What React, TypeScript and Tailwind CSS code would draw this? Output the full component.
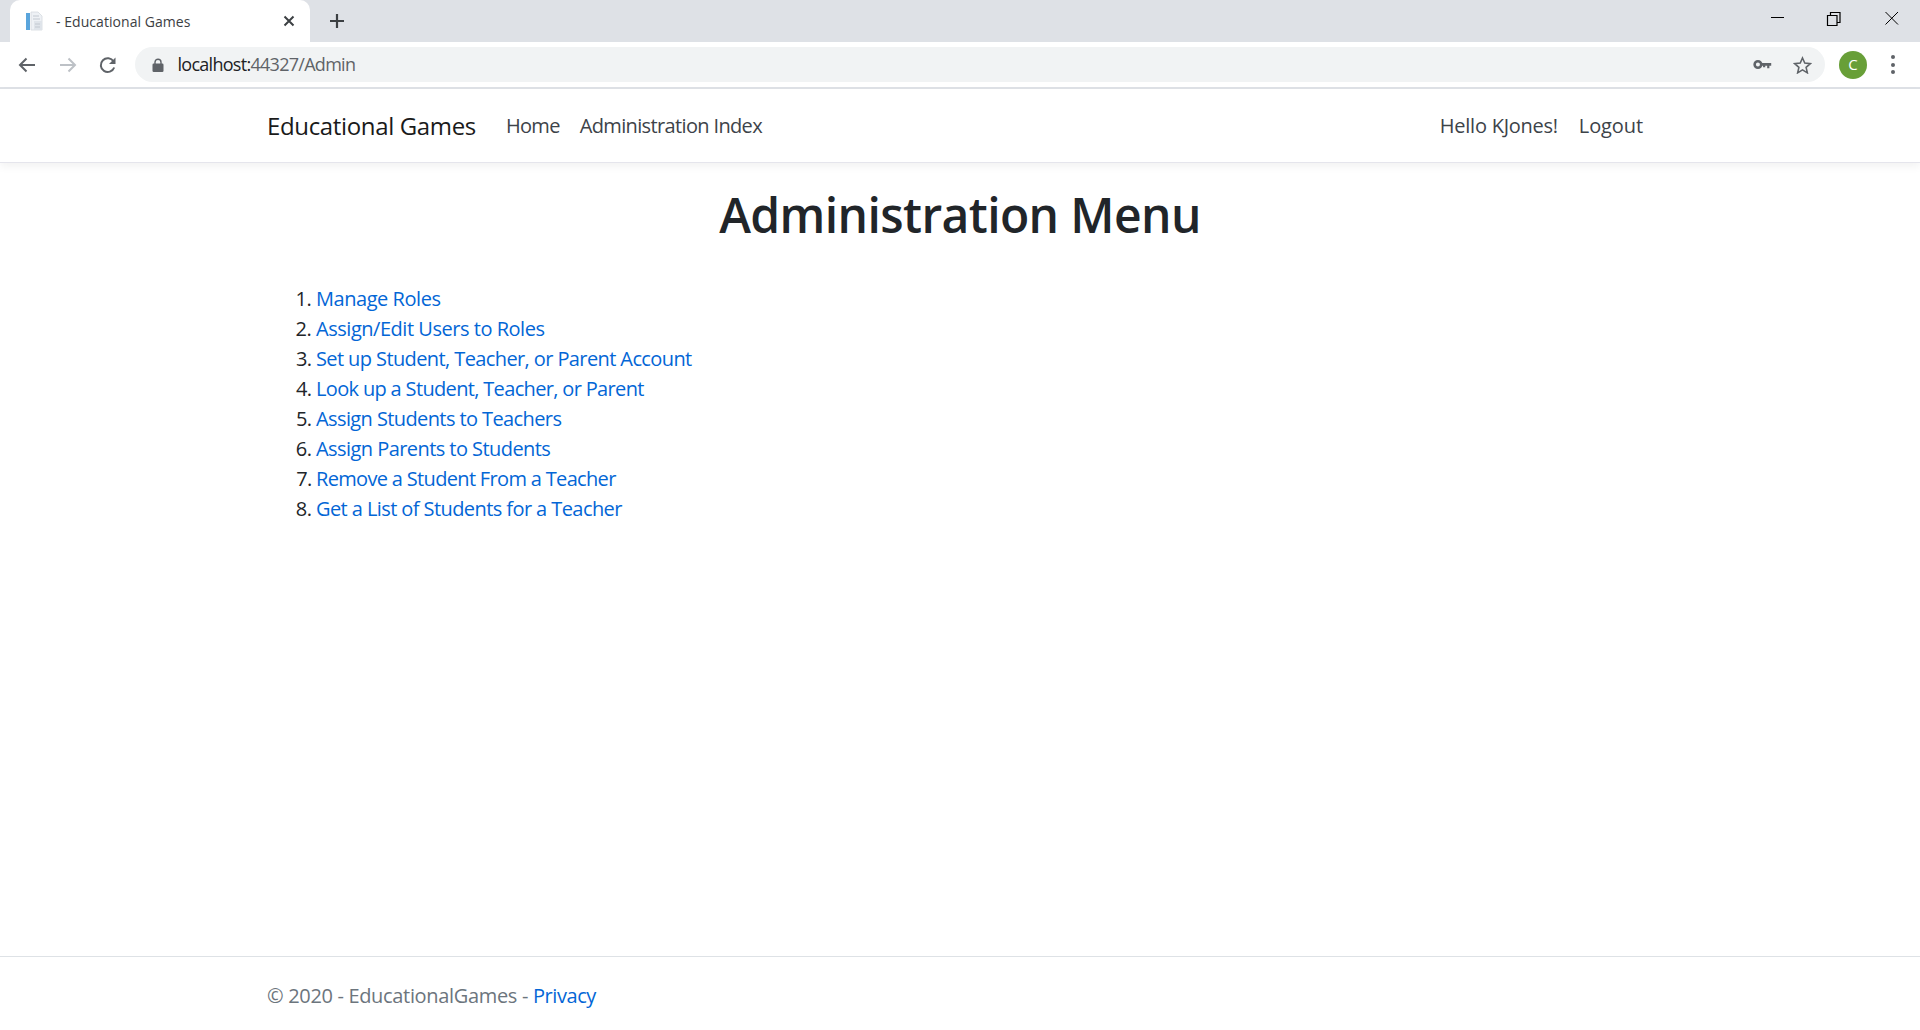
const font = "font-['Open_Sans','Noto_Sans',sans-serif]";

const links = [
  { t: "Manage Roles", c: "tracking-[-0.45px]" },
  { t: "Assign/Edit Users to Roles", c: "tracking-[-0.47px]" },
  { t: "Set up Student, Teacher, or Parent Account", c: "tracking-[-0.6px]" },
  { t: "Look up a Student, Teacher, or Parent", c: "tracking-[-0.66px]" },
  { t: "Assign Students to Teachers", c: "tracking-[-0.6px]" },
  { t: "Assign Parents to Students", c: "tracking-[-0.56px]" },
  { t: "Remove a Student From a Teacher", c: "tracking-[-0.67px]" },
  { t: "Get a List of Students for a Teacher", c: "tracking-[-0.58px]" },
];

function Favicon() {
  return (
    <svg width="20" height="20" viewBox="0 0 20 20" className="shrink-0">
      <rect x="1" y="2" width="4" height="17" fill="#5aa5dc" />
      <path d="M6 1h7l4 4v14H6z" fill="#eef1f5" stroke="#d5dae0" strokeWidth="0.8" />
      <path d="M9 10h8v9H9z" fill="#dfe4ea" />
      <path d="M8 5h6M8 8h7M10 13h5M10 16h5" stroke="#c2c8d0" strokeWidth="1" />
    </svg>
  );
}

function TabBar() {
  return (
    <div className="h-[42px] bg-[#dee1e6] flex items-end relative shrink-0">
      <div className="ml-[10px] w-[300px] h-[42px] bg-white rounded-t-[10px] flex items-center pl-[15px] pr-[14px]">
        <Favicon />
        <span className="ml-[11px] text-[14px] text-[#3c4043] flex-1 font-['Open_Sans',sans-serif] tracking-[0.05px]">- Educational Games</span>
        <svg width="14" height="14" viewBox="0 0 14 14" className="text-[#3c4043]">
          <path d="M2.5 2.5l9 9M11.5 2.5l-9 9" stroke="currentColor" strokeWidth="2" />
        </svg>
      </div>
      <div className="ml-[19px] h-[42px] flex items-center">
        <svg width="16" height="16" viewBox="0 0 16 16" className="text-[#3c4043]">
          <path d="M8 1v14M1 8h14" stroke="currentColor" strokeWidth="2.2" />
        </svg>
      </div>
      <div className="ml-auto h-[42px] flex items-start">
        <svg width="150" height="42" viewBox="0 0 150 42" className="block">
          <path d="M1 17.5h13" stroke="#000" strokeWidth="1" fill="none" />
          <path d="M57.5 15.5h9.5v10h-9.5z M60.5 15.5v-3h9.5v10h-3" stroke="#000" strokeWidth="1.2" fill="none" />
          <path d="M115.5 12l12.5 12.5M128 12l-12.5 12.5" stroke="#000" strokeWidth="1" fill="none" />
        </svg>
      </div>
    </div>
  );
}

function Toolbar() {
  return (
    <div className="h-[45px] bg-white flex items-center border-b-[2px] border-[#dee1e6] box-content shrink-0">
      <div className="w-[135px] pl-[18px] flex items-center gap-[22px] shrink-0">
        <svg width="18" height="16" viewBox="0 0 18 16"><path d="M17 8H2.5M8.5 1.5L2 8l6.5 6.5" stroke="#5f6368" strokeWidth="2" fill="none" /></svg>
        <svg width="18" height="16" viewBox="0 0 18 16" className="ml-[1px]"><path d="M1 8h14.5M9.5 1.5L16 8l-6.5 6.5" stroke="#bdc1c6" strokeWidth="2" fill="none" /></svg>
        <svg width="18" height="18" viewBox="0 0 18 18"><path d="M15.2 11.5a6.9 6.9 0 1 1-.6-6" stroke="#5f6368" strokeWidth="2" fill="none" /><path d="M16.5 1.5v6.5H10z" fill="#5f6368" /></svg>
      </div>
      <div className="w-[1690px] h-[35px] bg-[#f1f3f4] rounded-full flex items-center pl-[17px] pr-[13px] shrink-0">
        <svg width="12" height="14" viewBox="0 0 12 14" className="shrink-0">
          <path d="M3 6V4.2a3 3 0 0 1 6 0V6" stroke="#5f6368" strokeWidth="1.4" fill="none" />
          <rect x="0.5" y="5.5" width="11" height="8.5" rx="1.2" fill="#5f6368" />
        </svg>
        <span className={`ml-[13.5px] text-[18px] tracking-[-0.72px] text-[#202124] ${font}`}>
          localhost<span className="text-[#202124]">:</span><span className="text-[#5f6368]">44327/Admin</span>
        </span>
        <div className="ml-auto flex items-center gap-[21px]">
          <svg width="19" height="11" viewBox="0 0 20 12"><circle cx="5" cy="6" r="3.6" stroke="#5f6368" strokeWidth="2.8" fill="none" /><path d="M9 4.4h10.5v3h-2v2.6h-2.4V7.4H13v1.6h-2.4V7.4H9z" fill="#5f6368" /></svg>
          <svg width="19" height="18" viewBox="0 0 24 23"><path d="M12 2.5l2.9 6.6 7.1.7-5.4 4.7 1.6 7-6.2-3.7-6.2 3.7 1.6-7L2 9.8l7.1-.7z" stroke="#5f6368" strokeWidth="2" fill="none" /></svg>
        </div>
      </div>
      <div className="ml-[14px] w-[28px] h-[28px] rounded-full bg-[#689f38] text-white flex items-center justify-center text-[15px] font-['Open_Sans',sans-serif] shrink-0">C</div>
      <div className="ml-[24px] flex flex-col gap-[3.5px] shrink-0">
        <span className="block w-[4px] h-[4px] rounded-full bg-[#5f6368]" />
        <span className="block w-[4px] h-[4px] rounded-full bg-[#5f6368]" />
        <span className="block w-[4px] h-[4px] rounded-full bg-[#5f6368]" />
      </div>
    </div>
  );
}

export default function App() {
  return (
    <div className={`w-[1920px] h-[1030px] overflow-hidden flex flex-col bg-white ${font}`}>
      <TabBar />
      <Toolbar />
      <nav className="h-[74px] border-b border-[#e5e5ec] shadow-[0_4px_8px_rgba(0,0,0,0.05)] shrink-0">
        <div className="w-[1416px] mx-auto px-[15px] h-full flex items-center">
          <span className="text-[24px] tracking-[-0.35px] text-[#1a1a1a] mr-[30px]">Educational Games</span>
          <a className="text-[20px] tracking-[-0.7px] text-[#3d4349] px-[10px] -ml-[10px]">Home</a>
          <a className="text-[20px] tracking-[-0.64px] text-[#3d4349] px-[10px]">Administration Index</a>
          <a className="ml-auto text-[20px] tracking-[-0.25px] text-[#3d4349] px-[10px]">Hello KJones!</a>
          <a className="text-[20px] tracking-[-0.1px] text-[#3d4349] px-[10px] ml-[1px]">Logout</a>
        </div>
      </nav>
      <main className="flex-1 w-[1416px] mx-auto px-[15px] text-[#212529]">
        <h1 className="text-center text-[48px] font-semibold leading-[60px] mt-[22px] tracking-[-0.6px] text-[#212529]">Administration Menu</h1>
        <ol className="list-decimal mt-[39px] pl-[49px] text-[20px] leading-[30px]">
          {links.map((l) => (
            <li key={l.t} className={l.c}><a className="text-[#0366d6]">{l.t}</a></li>
          ))}
        </ol>
      </main>
      <footer className="h-[74px] border-t border-[#dee2e6] shrink-0">
        <div className="w-[1416px] mx-auto px-[15px] pt-[24px] text-[20px] leading-[30px] text-[#6c757d]">
          <span className="tracking-[-0.33px]">© 2020 - EducationalGames - </span><a className="text-[#0366d6] tracking-[-0.41px]">Privacy</a>
        </div>
      </footer>
    </div>
  );
}
